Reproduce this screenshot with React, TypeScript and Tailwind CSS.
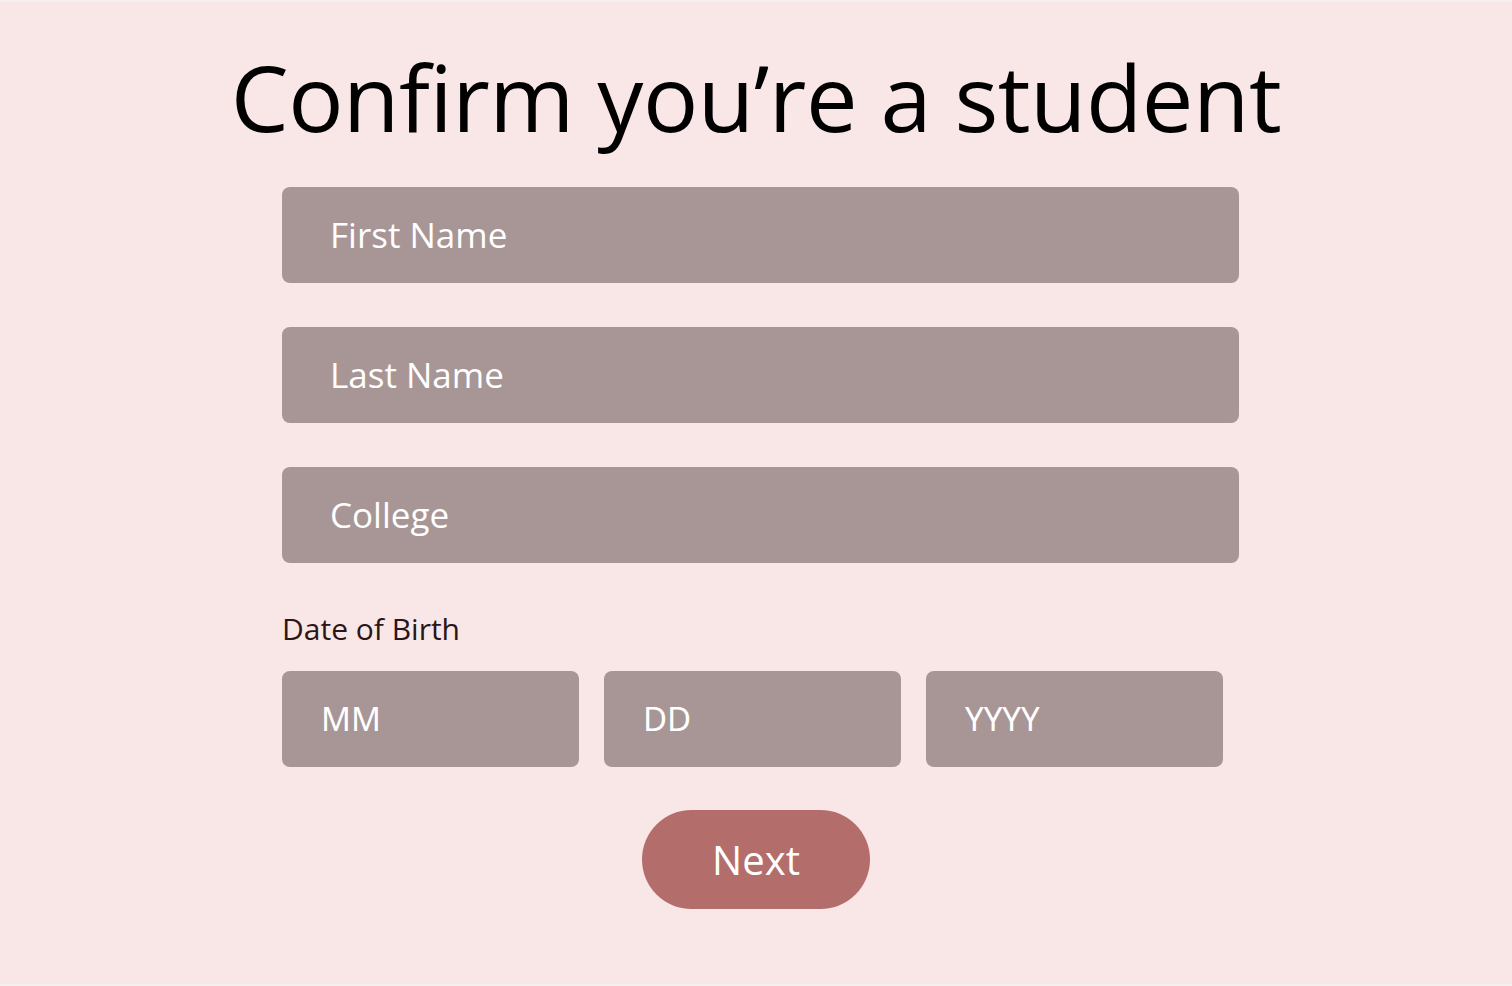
export default function App() {
  const fields = ["First Name", "Last Name", "College"];
  const dob = ["MM", "DD", "YYYY"];

  return (
    <div className="min-h-[986px] w-full bg-[#f2f0f0] py-[2px]" style={{ fontFamily: '"Open Sans", "Liberation Sans", sans-serif' }}>
      <div className="flex h-[982px] flex-col items-center bg-[#f9e6e6]">
        <h1 className="mt-[38px] text-[92px] leading-[114px] tracking-[-0.5px] text-black">Confirm you’re a student</h1>

        <div className="ml-[9px] mt-[33px] flex w-[957px] flex-col gap-[44px]">
          {fields.map((f) => (
            <div key={f} className="flex h-[96px] items-center rounded-[8px] bg-[#a89696] pl-[48px]">
              <span className="text-[35px] text-white">{f}</span>
            </div>
          ))}
        </div>

        <div className="ml-[9px] mt-[40px] w-[957px]">
          <div className="text-[30px] leading-[52px] text-[#2a1517]">Date of Birth</div>
          <div className="mt-[16px] flex gap-[25px]">
            {dob.map((d) => (
              <div key={d} className="flex h-[96px] w-[297px] items-center rounded-[8px] bg-[#a89696] pl-[39px]">
                <span className="text-[33px] text-white" style={{ fontFamily: '"Noto Sans", sans-serif' }}>{d}</span>
              </div>
            ))}
          </div>
        </div>

        <button className="mt-[43px] flex h-[99px] w-[228px] items-center justify-center rounded-full bg-[#b36e6c] text-[40px] text-white">
          Next
        </button>
      </div>
    </div>
  );
}
